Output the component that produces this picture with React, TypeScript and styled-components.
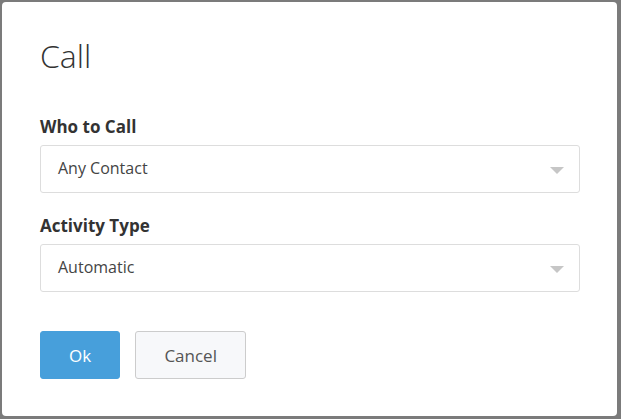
import React, { useState } from 'react';
import styled, { createGlobalStyle } from 'styled-components';

const GlobalStyle = createGlobalStyle`
  html, body {
    margin: 0;
    padding: 0;
    background: #7b7b7b;
    font-family: 'Open Sans', 'Liberation Sans', sans-serif;
  }
  * {
    box-sizing: border-box;
  }
`;

const Backdrop = styled.div`
  width: 621px;
  height: 419px;
  padding: 2px 4px 3px 2px;
`;

const Modal = styled.div`
  width: 615px;
  height: 414px;
  background: #fff;
  border-radius: 4px;
  padding: 34px 37px 37px 38px;
  display: flex;
  flex-direction: column;
`;

const Title = styled.h1`
  margin: 0 0 40px;
  font-size: 32px;
  line-height: 40px;
  font-weight: 300;
  color: #333;
`;

const Field = styled.div<{ $last?: boolean }>`
  display: flex;
  flex-direction: column;
  gap: 7px;
  margin-bottom: ${({ $last }) => ($last ? '39px' : '22px')};
`;

const Label = styled.label`
  font-size: 17px;
  line-height: 22px;
  font-weight: 700;
  color: #333;
`;

const Select = styled.div`
  height: 48px;
  width: 540px;
  border: 1px solid #ddd;
  border-radius: 3px;
  padding: 0 15px 3px 17px;
  display: flex;
  align-items: center;
  justify-content: space-between;
  font-size: 16px;
  color: #444;
  cursor: pointer;
`;

const Caret = styled.span`
  width: 0;
  height: 0;
  border-left: 7px solid transparent;
  border-right: 7px solid transparent;
  border-top: 7px solid #c6c6c6;
  margin-top: 5px;
`;

const Actions = styled.div`
  display: flex;
  gap: 15px;
`;

const Button = styled.button<{ $primary?: boolean }>`
  height: 48px;
  padding: 0 28px;
  border-radius: 3px;
  font-family: inherit;
  font-size: 17px;
  cursor: pointer;
  border: 1px solid ${({ $primary }) => ($primary ? '#479fdb' : '#ccc')};
  background: ${({ $primary }) => ($primary ? '#479fdb' : '#f7f8fa')};
  color: ${({ $primary }) => ($primary ? '#fff' : '#555')};
  min-width: ${({ $primary }) => ($primary ? '80px' : '111px')};
`;

const fields = [
  { label: 'Who to Call', value: 'Any Contact' },
  { label: 'Activity Type', value: 'Automatic' },
];

const App: React.FC = () => {
  const [values] = useState(fields);

  return (
    <>
      <GlobalStyle />
      <Backdrop>
        <Modal>
          <Title>Call</Title>
          {values.map((f, i) => (
            <Field key={f.label} $last={i === values.length - 1}>
              <Label>{f.label}</Label>
              <Select>
                <span>{f.value}</span>
                <Caret />
              </Select>
            </Field>
          ))}
          <Actions>
            <Button $primary>Ok</Button>
            <Button>Cancel</Button>
          </Actions>
        </Modal>
      </Backdrop>
    </>
  );
};

export default App;
